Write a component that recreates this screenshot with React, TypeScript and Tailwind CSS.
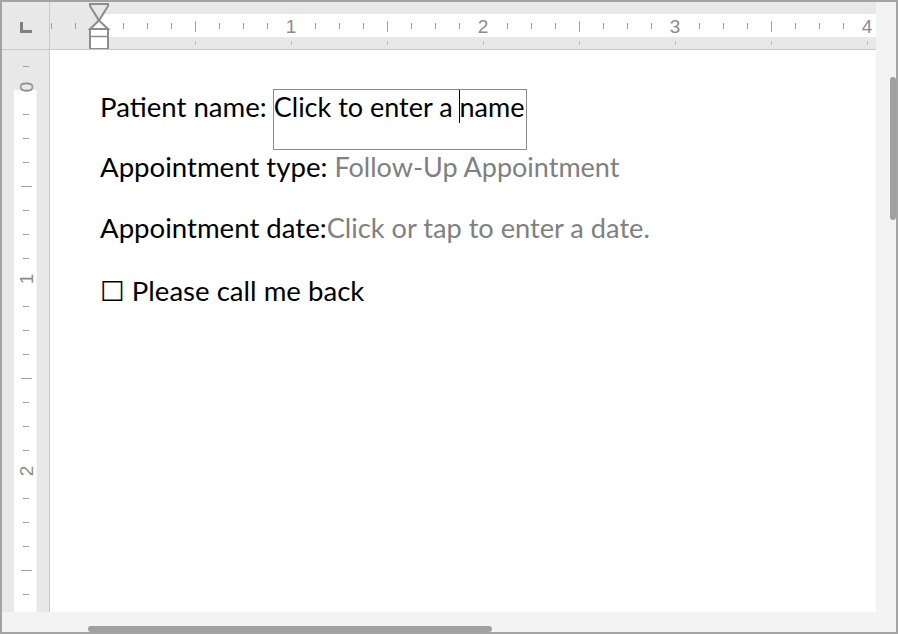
import React from "react";

const rulerGray = "#a0a0a0";

function HorizontalRuler() {
  // 1/8 inch = 24px, margin (0) at x=99 in page coords; svg starts at x=50
  const ticks = [];
  for (let k = -2; k <= 32; k++) {
    if (k === 0 || k % 8 === 0) continue;
    const x = 49 + k * 24 + 0.5;
    const long = k % 4 === 0;
    ticks.push(
      <line key={k} x1={x} x2={x} y1={long ? 19 : 21} y2={long ? 30 : 27} stroke={rulerGray} strokeWidth={1} />
    );
  }
  const tabs = [];
  for (let j = 0; j < 8; j++) {
    const x = 145 + j * 96 + 0.5;
    tabs.push(<line key={j} x1={x} x2={x} y1={39} y2={43} stroke="#bdbdbd" strokeWidth={1} />);
  }
  return (
    <svg width="826" height="47" className="block">
      <rect x="0" y="0" width="826" height="47" fill="#e8e8e8" />
      <rect x="49" y="12" width="777" height="23" fill="#ffffff" />
      {ticks}
      {tabs}
      {[1, 2, 3, 4].map((n) => (
        <text
          key={n}
          x={49 + n * 192}
          y={31}
          textAnchor="middle"
          fontFamily="'Liberation Sans', Arial, sans-serif"
          fontSize="19"
          fill="#8c8c8c"
        >
          {n}
        </text>
      ))}
      {/* indent markers */}
      <path d="M40 2 H58 V4 L49 18.5 L40 4 Z" fill="#e8e8e8" stroke="#8c8c8c" strokeWidth="2" strokeLinejoin="miter" />
      <path d="M49 18.5 L58 27 H40 Z" fill="#ffffff" stroke="#8c8c8c" strokeWidth="2" />
      <rect x="40" y="27" width="18" height="20" fill="#ffffff" stroke="#8c8c8c" strokeWidth="2" />
      <line x1="40" x2="58" y1="34.5" y2="34.5" stroke="#8c8c8c" strokeWidth="1.5" />
    </svg>
  );
}

function VerticalRuler() {
  // svg starts at y=50, margin (0) at y=90
  const ticks = [];
  for (let k = -1; k <= 21; k++) {
    if (k % 8 === 0) continue;
    const y = 40 + k * 24 + 0.5;
    const long = k % 4 === 0;
    ticks.push(
      <line key={k} y1={y} y2={y} x1={long ? 19 : 21} x2={long ? 30 : 27} stroke={rulerGray} strokeWidth={1} />
    );
  }
  return (
    <svg width="47" height="562" className="block">
      <rect x="0" y="0" width="47" height="562" fill="#e8e8e8" />
      <rect x="12" y="40" width="22.5" height="522" fill="#ffffff" />
      {ticks}
      {[0, 1, 2].map((n) => (
        <text
          key={n}
          transform={`translate(23 ${40 + n * 192 - 3}) rotate(-90)`}
          y={7.5}
          textAnchor="middle"
          fontFamily="'Liberation Sans', Arial, sans-serif"
          fontSize="19"
          fill="#8c8c8c"
        >
          {n}
        </text>
      ))}
    </svg>
  );
}

export default function App() {
  return (
    <div className="w-[898px] h-[634px] border-2 border-[#a3a3a3] bg-[#f3f3f3] flex flex-col overflow-hidden">
      <div className="flex h-[610px]">
        <div className="w-[874px] flex flex-col">
          {/* ruler row */}
          <div className="flex h-[48px] border-b border-[#c8c8c8]">
            <div className="w-[48px] border-r border-[#c8c8c8] bg-[#e8e8e8] flex items-start pt-[20px] pl-[18px]">
              <div className="w-[12px] h-[11px] border-l-[3px] border-b-[3px] border-[#808080]" />
            </div>
            <div className="flex-1 overflow-hidden">
              <HorizontalRuler />
            </div>
          </div>
          {/* document row */}
          <div className="flex h-[562px]">
            <div className="w-[48px] border-r border-[#c8c8c8] overflow-hidden">
              <VerticalRuler />
            </div>
            <div
              className="flex-1 bg-white flex flex-col pt-[39px] pl-[50px] text-[27.6px] leading-[33px] text-black"
              style={{ fontFamily: "Lato, 'Open Sans', sans-serif" }}
            >
              <div className="flex items-baseline h-[61px]">
                <span className="whitespace-pre">Patient name: </span>
                <div className="w-[254px] h-[61px] -ml-px border border-[#8c8c8c] whitespace-pre text-[27px]">
                  Click to enter a <span className="inline-block w-px h-[33px] bg-black -mr-px align-top" />name
                </div>
              </div>
              <div className="flex h-[61px] whitespace-pre">
                <span>Appointment type: </span>
                <span className="text-[#808080] text-[27px]">Follow-Up Appointment</span>
              </div>
              <div className="flex h-[63px] whitespace-pre">
                <span>Appointment date:</span>
                <span className="text-[#808080] text-[27.2px]">Click or tap to enter a date.</span>
              </div>
              <div className="flex items-baseline whitespace-pre">
                <span style={{ fontFamily: "'DejaVu Sans', sans-serif" }}>☐</span>
                <span> Please call me back</span>
              </div>
            </div>
          </div>
        </div>
        {/* vertical scrollbar */}
        <div className="w-[20px] flex justify-end pt-[75px]">
          <div className="w-[6px] h-[143px] rounded-full bg-[#a0a0a0]" />
        </div>
      </div>
      {/* horizontal scrollbar */}
      <div className="h-[20px] pl-[86px] pt-[14px]">
        <div className="w-[404px] h-[6px] rounded-full bg-[#a0a0a0]" />
      </div>
    </div>
  );
}
